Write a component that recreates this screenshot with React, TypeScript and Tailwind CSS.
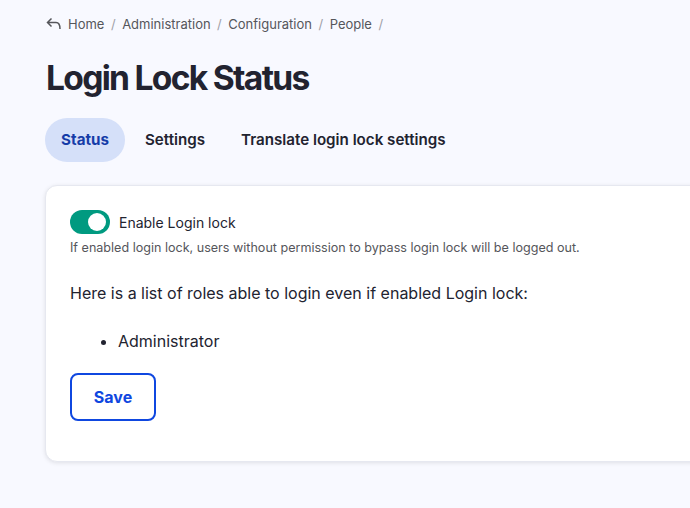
export default function App() {
  return (
    <div className="w-[690px] h-[508px] overflow-hidden bg-[#f8f9ff] text-[#222330] font-['Inter',sans-serif]">
      <div className="pl-[45px]">
        <nav className="flex items-center h-[16px] mt-[17px] pl-[1px] text-[13px] text-[#55565b]">
          <svg width="16" height="16" viewBox="0 0 16 16" fill="none" stroke="#55565b" strokeWidth="1.5" className="mr-[6px] -mt-[2px]">
            <path d="M5.5 2.5 L1.5 6.5 L5.5 10.5 M1.5 6.5 H10 C12.8 6.5 14 8.5 14 13" />
          </svg>
          <span>Home</span><span className="mx-[6.5px] text-[#a0a1a8]">/</span>
          <span>Administration</span><span className="mx-[6.5px] text-[#a0a1a8]">/</span>
          <span>Configuration</span><span className="mx-[6.5px] text-[#a0a1a8]">/</span>
          <span>People</span><span className="mx-[6.5px] text-[#a0a1a8]">/</span>
        </nav>
        <h1 className="mt-[21px] pl-[1px] h-[48px] text-[33.6px] leading-[48px] font-bold tracking-[-1.7px] text-[#222330]">Login Lock Status</h1>
        <div className="mt-[16px] flex items-center text-[15.15px] font-semibold h-[44px]">
          <span className="h-[44px] w-[80px] justify-center rounded-[22px] bg-[#d5e0f9] text-[#153ca8] font-bold flex items-center">Status</span>
          <span className="pl-[20px] pr-[36px]">Settings</span>
          <span>Translate login lock settings</span>
        </div>
        <div className="mt-[23px] w-[700px] h-[277px] bg-white rounded-[12px] border border-[#e6e8f0] shadow-[0_1px_4px_rgba(0,0,0,0.1)] pl-[24px] pt-[24px]">
          <div className="flex items-center h-[24px] gap-[9px] text-[14px]">
            <span className="relative w-[40px] h-[24px] rounded-full bg-[#009a80]">
              <span className="absolute right-[4px] top-[3px] w-[18px] h-[18px] rounded-full bg-white" />
            </span>
            <span>Enable Login lock</span>
          </div>
          <p className="mt-[6px] text-[12.57px] leading-[16px] text-[#55565b]">If enabled login lock, users without permission to bypass login lock will be logged out.</p>
          <p className="mt-[25px] text-[16px] leading-[24px]">Here is a list of roles able to login even if enabled Login lock:</p>
          <ul className="mt-[24px] list-disc pl-[48px] text-[16px] leading-[24px]"><li>Administrator</li></ul>
          <button className="mt-[20px] w-[86px] h-[48px] rounded-[8px] border-2 border-[#0f47e0] bg-white text-[#0f47e0] font-bold text-[16px]">Save</button>
        </div>
      </div>
    </div>
  );
}
